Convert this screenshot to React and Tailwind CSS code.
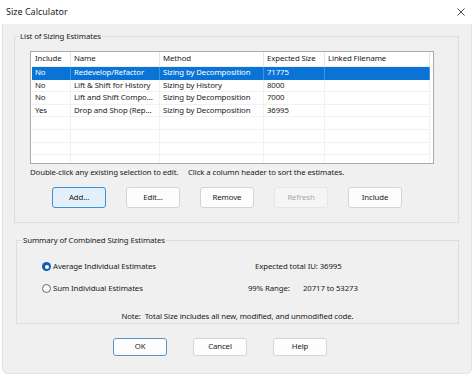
import React from 'react';

const FONT = { fontFamily: '"Noto Sans", "Open Sans", sans-serif' };

const COLS = [
  { key: 'include', label: 'Include', w: 'w-[39px]' },
  { key: 'name', label: 'Name', w: 'w-[89px]' },
  { key: 'method', label: 'Method', w: 'w-[104px]' },
  { key: 'size', label: 'Expected Size', w: 'w-[61px]' },
  { key: 'file', label: 'Linked Filename', w: 'w-[105px]' },
];

const ROWS = [
  { include: 'No', name: 'Redevelop/Refactor', method: 'Sizing by Decomposition', size: '71775', file: '', selected: true },
  { include: 'No', name: 'Lift & Shift for History', method: 'Sizing by History', size: '8000', file: '' },
  { include: 'No', name: 'Lift and Shift Compo...', method: 'Sizing by Decomposition', size: '7000', file: '' },
  { include: 'Yes', name: 'Drop and Shop (Rep...', method: 'Sizing by Decomposition', size: '36995', file: '' },
  {}, {}, {}, {},
];

const TXT = 'text-[7.8px] tracking-[-0.1px]';

const Btn = ({ children, variant = 'normal', size = 'h-[21px]' }) => {
  const styles = {
    normal: 'bg-[#fdfdfd] border-[#d4d4d4] text-[#1a1a1a]',
    primary: 'bg-[#e3f0fb] border-[#3d8fd6] text-[#1a1a1a]',
    outline: 'bg-[#fdfdfd] border-[#5b93c9] text-[#1a1a1a]',
    disabled: 'bg-[#f5f5f5] border-[#e6e6e6] text-[#a8a8a8]',
  };
  return (
    <button className={`w-[54px] ${size} flex items-center justify-center rounded-[3px] border ${TXT} leading-none ${styles[variant]}`}>
      {children}
    </button>
  );
};

const Radio = ({ checked }) =>
  checked ? (
    <span className="w-[9px] h-[9px] rounded-full bg-[#0a5fb4] flex items-center justify-center shrink-0">
      <span className="w-[4px] h-[4px] rounded-full bg-white" />
    </span>
  ) : (
    <span className="w-[9px] h-[9px] rounded-full border border-[#6b6b6b] bg-[#f7f7f7] shrink-0" />
  );

const EstimatesTable = () => (
  <div className="ml-[15px] mt-[9px] w-[404px] h-[113px] border border-[#a9a9a9] bg-white overflow-hidden">
    {/* header */}
    <div className="flex h-[15px] ml-[1px] border-b border-[#eeeeee]">
      {COLS.map(c => (
        <div key={c.key} className={`${c.w} pl-[3px] border-r border-[#e5e5e5] flex items-center ${TXT} text-[#1a1a1a] whitespace-nowrap`}>
          {c.label}
        </div>
      ))}
    </div>
    {ROWS.map((r, i) => (
      <div key={i} className={`flex h-[12.6px] ml-[1px] w-fit ${r.selected ? 'bg-[#0a74d6] text-white' : 'text-[#1a1a1a] border-b border-[#f1f1f1]'}`}>
        {COLS.map(c => (
          <div key={c.key} className={`${c.w} pl-[3px] flex items-center ${TXT} whitespace-nowrap overflow-hidden ${r.selected ? 'border-r border-[#3e92e0]' : 'border-r border-[#f1f1f1]'}`}>
            {r[c.key] || ''}
          </div>
        ))}
      </div>
    ))}
  </div>
);

export default function App() {
  return (
    <div className="w-[474px] h-[377px] bg-white overflow-hidden text-[#1a1a1a]" style={FONT}>
      {/* title bar */}
      <div className="h-[24px] flex items-center justify-between pl-[6px] pr-[9px]">
        <span className="text-[9px] text-[#1a1a1a]">Size Calculator</span>
        <svg width="8" height="8" viewBox="0 0 8 8" className="text-[#333]">
          <path d="M0.5 0.5 L7.5 7.5 M7.5 0.5 L0.5 7.5" stroke="currentColor" strokeWidth="0.9" />
        </svg>
      </div>

      {/* body */}
      <div className="mx-[2px] h-[350px] bg-[#f0f0f0] rounded-b-[6px] border-x border-b border-[#e2e2e2] flex flex-col">
        {/* list group */}
        <div className="ml-[11px] mt-[12px] w-[445px] h-[187px] border border-[#dddddd] flex flex-col">
          <div className={`-mt-[6px] ml-[4px] w-fit px-[1px] leading-[11px] bg-[#f0f0f0] ${TXT}`}>List of Sizing Estimates</div>
          <EstimatesTable />
          <div className={`ml-[15px] mt-[3px] flex ${TXT} leading-[11px] whitespace-nowrap`}>
            <span className="w-[158px]">Double-click any existing selection to edit.</span>
            <span>Click a column header to sort the estimates.</span>
          </div>
          <div className="ml-[37px] mt-[9px] flex gap-[20px]">
            <Btn variant="primary">Add...</Btn>
            <Btn>Edit...</Btn>
            <Btn>Remove</Btn>
            <Btn variant="disabled">Refresh</Btn>
            <Btn>Include</Btn>
          </div>
        </div>

        {/* summary group */}
        <div className="ml-[13px] mt-[17px] w-[443px] h-[84px] border border-[#dddddd] flex flex-col">
          <div className={`-mt-[6px] ml-[5px] w-fit px-[1px] leading-[11px] bg-[#f0f0f0] ${TXT}`}>Summary of Combined Sizing Estimates</div>
          <div className={`ml-[25px] mt-[15px] flex items-center h-[11px] ${TXT}`}>
            <div className="w-[206px] flex items-center gap-[2px]">
              <Radio checked />
              <span>Average Individual Estimates</span>
            </div>
            <span className="ml-[7px]">Expected total IU: 36995</span>
          </div>
          <div className={`ml-[25px] mt-[11px] flex items-center h-[11px] ${TXT}`}>
            <div className="w-[206px] flex items-center gap-[2px]">
              <Radio />
              <span>Sum Individual Estimates</span>
            </div>
            <span className="w-[55px]">99% Range:</span>
            <span>20717 to 53273</span>
          </div>
          <div className={`mt-[17px] text-center ${TXT} leading-[11px]`}>
            Note:&nbsp; Total Size includes all new, modified, and unmodified code.
          </div>
        </div>

        {/* dialog buttons */}
        <div className="ml-[110px] mt-[14px] flex gap-[26px]">
          <Btn variant="outline" size="h-[18px]">OK</Btn>
          <Btn size="h-[18px]">Cancel</Btn>
          <Btn size="h-[18px]">Help</Btn>
        </div>
      </div>
    </div>
  );
}
